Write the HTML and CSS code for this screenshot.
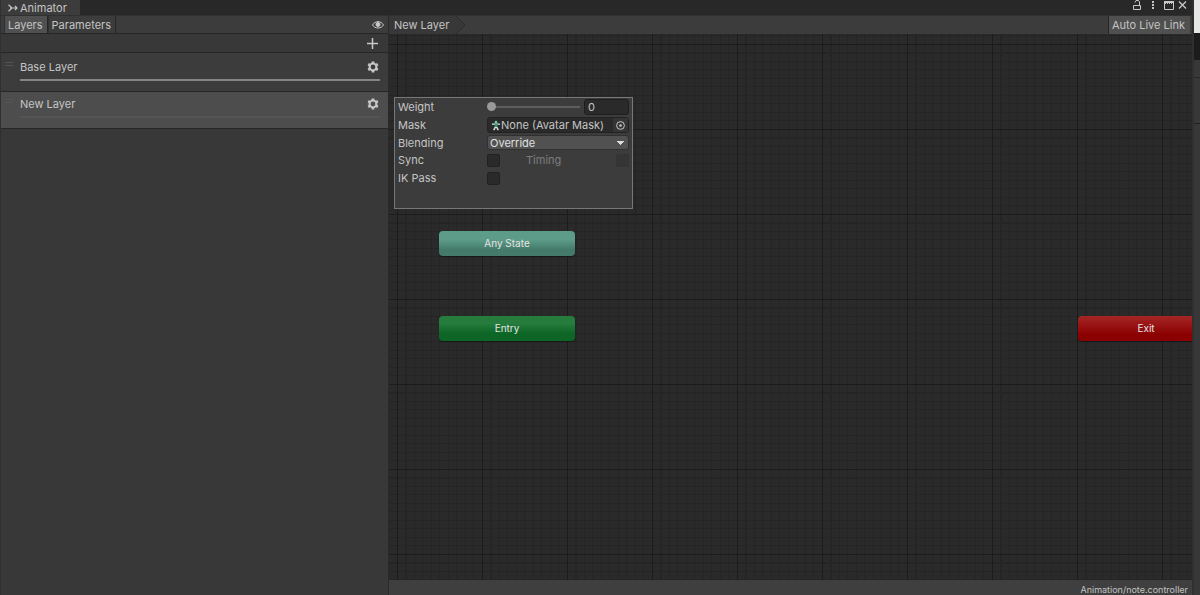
FILE: index.html
```
<!DOCTYPE html>
<html lang="en">
<head>
<meta charset="utf-8">
<title>Animator</title>
<link rel="stylesheet" href="styles.css">
</head>
<body>
<div class="app">
  <main class="window">
    <header class="titlebar">
      <div class="tab">
        <svg class="tab-icon" width="10" height="8" viewBox="0 0 10 8" fill="none" stroke="currentColor" stroke-width="1.2"><path d="M.5 .8L4 4L.5 7.2M2 4H9M7 2L9 4L7 6"/></svg>
        <span>Animator</span>
      </div>
      <div class="window-buttons">
        <button class="icon-btn" aria-label="Lock"><svg width="10" height="10" viewBox="0 0 10 10" fill="none" stroke="currentColor"><path d="M1.5 5.500h7v4h-7zM3 2.500V2L4 .5h2.500L7.500 2V5.500"/></svg></button>
        <button class="icon-btn" aria-label="More"><svg width="4" height="10" viewBox="0 0 4 10" fill="currentColor"><path d="M1 1h2v2H1zM1 4h2v2H1zM1 7h2v2H1z"/></svg></button>
        <button class="icon-btn" aria-label="Maximize"><svg width="10" height="10" viewBox="0 0 10 10" fill="none" stroke="currentColor"><path d="M.5 2h9" stroke-width="2"/><path d="M1 3.500h8" stroke-dasharray="1 1"/><path d="M.5 1v8.500h9V1"/></svg></button>
        <button class="icon-btn close" aria-label="Close"><svg width="9" height="10" viewBox="0 0 9 10" fill="none" stroke="currentColor" stroke-width="1.300"><path d="M1 1.500l7 7M8 1.500l-7 7"/></svg></button>
      </div>
    </header>
    <div class="columns">
      <aside class="sidebar">
        <nav class="side-tabs">
          <button class="side-tab active">Layers</button>
          <button class="side-tab">Parameters</button>
          <button class="icon-btn eye" aria-label="Toggle panel"><svg width="12" height="8" viewBox="0 0 12 8" fill="none" stroke="currentColor"><path d="M.5 4C3-.5 9-.5 11.500 4C9 8 3 8 .5 4z"/><circle cx="6" cy="3.500" r="2" fill="currentColor"/></svg></button>
        </nav>
        <div class="add-row"><button class="icon-btn" aria-label="Add layer"><svg width="11" height="11" viewBox="0 0 11 11" stroke="currentColor" stroke-width="1.500"><path d="M5.500 0v11M0 5.500h11"/></svg></button></div>
        <ul class="layers">
          <li class="layer">
            <span class="grip"></span>
            <div class="layer-body">
              <div class="layer-head"><span>Base Layer</span><button class="icon-btn" aria-label="Base Layer settings"><svg width="12" height="12" viewBox="0 0 12 12"><use href="#gear"/></svg></button></div>
              <div class="weight full"></div>
            </div>
          </li>
          <li class="layer selected">
            <span class="grip"></span>
            <div class="layer-body">
              <div class="layer-head"><span>New Layer</span><button class="icon-btn" aria-label="New Layer settings"><svg width="12" height="12" viewBox="0 0 12 12"><g id="gear" fill="none" stroke="currentColor"><circle cx="6" cy="6" r="3.400" stroke-width="2"/><path stroke-width="2.600" d="M6 .6v1.600M6 9.800v1.600M1.200 3.200l1.400.8M9.400 8l1.400.8M1.200 8.800l1.400-.8M9.400 4l1.400-.8"/></g></svg></button></div>
              <div class="weight"></div>
            </div>
          </li>
        </ul>
      </aside>
      <section class="graph">
        <div class="crumbs">
          <span class="crumb">New Layer</span>
          <svg class="crumb-arrow" width="10" height="18" viewBox="0 0 10 18"><path d="M0 0L9 9L0 18z" fill="#383838"/><path d="M0 0L9 9L0 18" fill="none" stroke="#2b2b2b"/></svg>
          <button class="live">Auto Live Link</button>
        </div>
        <div class="canvas">
          <form class="settings">
            <label for="weight">Weight</label>
            <div class="field"><input class="slider" id="weight" type="range" min="0" max="1" value="0"><input class="number" type="text" value="0" aria-label="Weight value"></div>
            <label for="mask">Mask</label>
            <div class="field object">
              <svg width="10" height="11" viewBox="0 0 11 11"><path d="M1 4h9M5.500 4v3M5.500 6L3 10.500M5.500 6L8 10.500" stroke="#d5e5dc" stroke-width="1.600" fill="none"/><path d="M4 4h3v3H4z" fill="#1f9a6c"/><circle cx="5.500" cy="1.800" r="1.400" fill="#6fd0a8"/></svg>
              <input class="mask" id="mask" type="text" value="None (Avatar Mask)" readonly>
              <button type="button" class="icon-btn picker" aria-label="Select mask"><svg width="9" height="9" viewBox="0 0 9 9"><circle cx="4.500" cy="4.500" r="3.900" fill="none" stroke="currentColor"/><circle cx="4.500" cy="4.500" r="1.300" fill="currentColor"/></svg></button>
            </div>
            <label for="blend">Blending</label>
            <div class="field"><select class="blend" id="blend"><option>Override</option><option>Additive</option></select></div>
            <label for="sync">Sync</label>
            <div class="field"><input class="check" id="sync" type="checkbox"><label class="timing" for="timing">Timing</label><input class="check" id="timing" type="checkbox" disabled></div>
            <label for="ik">IK Pass</label>
            <div class="field"><input class="check" id="ik" type="checkbox"></div>
          </form>
          <div class="node any">Any State</div>
          <div class="node entry">Entry</div>
          <div class="node exit">Exit</div>
        </div>
        <footer class="status">Animation/note.controller</footer>
      </section>
    </div>
  </main>
  <div class="edge"><div class="edge-light"></div><div class="edge-dark"></div><div class="edge-row"></div><div class="edge-body"></div></div>
</div>
</body>
</html>
```
FILE: styles.css
```
* { box-sizing: border-box; }
body { margin: 0; background: #383838; color: #c4c4c4; font: 11px/14px Inter, sans-serif; }
button, input, select { margin: 0; padding: 0; border: 0; color: inherit; font: inherit; background: none; }
svg { display: block; flex: none; }
.icon-btn { display: flex; align-items: center; justify-content: center; color: #c8c8c8; }
.app { display: flex; height: 100vh; overflow: hidden; }
.window { flex: 1; min-width: 0; display: flex; flex-direction: column; border-left: 1px solid #303030; }
.titlebar { display: flex; justify-content: space-between; height: 15px; background: #282828; }
.tab { display: flex; align-items: center; gap: 2px; width: 79px; padding-left: 7px; background: #3c3c3c; }
.window-buttons { display: flex; align-items: flex-start; gap: 9px; padding-right: 5px; }
.close { margin-left: -5px; }
.columns { flex: 1; min-height: 0; display: flex; }
.sidebar { flex: none; width: 387px; }
.side-tabs { display: flex; height: 19px; padding-left: 3px; border-bottom: 1px solid #262626; border-top: 1px solid #303030; background: #3c3c3c; }
.side-tab { padding: 0 4px 0 3px; border-right: 1px solid #262626; border-left: 1px solid #303030; }
.side-tab.active { background: #505050; }
.eye { margin-left: auto; padding-right: 4px; }
.add-row { display: flex; justify-content: flex-end; height: 19px; padding: 0 10px 0 0; border-bottom: 1px solid #262626; }
.layers { margin: 0; padding: 2px 0 0; list-style: none; background: #3c3c3c; }
.layer { display: flex; height: 37px; padding-right: 8px; border-bottom: 1px solid #262626; }
.layer.selected { background: #4d4d4d; }
.grip { width: 8px; height: 4px; margin: 7px 7px 0 4px; border: solid #555; border-width: 1px 0; }
.layer-body { flex: 1; padding-top: 4px; }
.layer-head { display: flex; justify-content: space-between; height: 16px; align-items: center; padding-right: 1px; }
.weight { height: 2px; margin-top: 4px; background: #555; }
.weight.full { background: #858585; }
.graph { flex: 1; min-width: 0; display: flex; flex-direction: column; border-left: 1px solid #2a2a2a; }
.crumbs { display: flex; height: 19px; border-top: 1px solid #303030; background: #3c3c3c; }
.crumb { padding: 2px 0 0 5px; background: #383838; width: 67px; }
.live { margin: 0 2px 0 auto; padding: 0 5px 0 3px; border-left: 1px solid #262626; background: #505050; }
.canvas {
  position: relative; flex: 1; overflow: hidden; background-color: #2a2a2a;
  --major: #1c1c1c; --minor: #252525;
  background-image:
    linear-gradient(90deg, var(--major) 1px, transparent 1px),
    linear-gradient(var(--major) 1px, transparent 1px),
    repeating-linear-gradient(90deg, var(--minor) 0 1px, transparent 1px 10%),
    repeating-linear-gradient(var(--minor) 0 1px, transparent 1px 10%);
  background-size: 85px 85px;
  background-position: 8px 10px;
}
.settings {
  position: absolute; left: 5px; top: 63px; width: 239px; height: 112px; padding: 0 3px;
  display: grid; grid-template-columns: 89px minmax(0, 1fr); grid-template-rows: 18px 18px 17px 18px 18px; align-content: start; align-items: center;
  border: 1px solid #777; background: #3c3c3c;
}
.field { display: flex; align-items: center; height: 16px; }
.slider { flex: 1; min-width: 0; height: 10px; margin-right: 4px; appearance: none; }
.slider::-webkit-slider-runnable-track { height: 2px; background: #5e5e5e; }
.slider::-webkit-slider-thumb { appearance: none; width: 9px; height: 9px; margin-top: -4px; border-radius: 50%; background: #999; }
.number { width: 45px; height: 16px; padding-left: 3px; border: 1px solid #1e1e1e; border-radius: 3px; background: #2a2a2a; }
.object { padding-left: 3px; border: 1px solid #222; border-radius: 3px; background: #2a2a2a; }
.mask { flex: 1; min-width: 0; }
.picker { width: 15px; height: 14px; background: #353535; }
.blend {
  width: 100%; height: 15px; padding-left: 2px; appearance: none; border: 1px solid #303030; border-radius: 3px; background: #515151; color: #e0e0e0; line-height: 12px;
  background-image: linear-gradient(to bottom left, #ddd 50%, transparent 50%), linear-gradient(to bottom right, #ddd 50%, transparent 50%);
  background-size: 4px 4px; background-repeat: no-repeat; background-position: right 7px top 5px, right 3px top 5px;
}
.check { appearance: none; width: 13px; height: 13px; border: 1px solid #212121; border-radius: 2px; background: #2a2a2a; }
.check:disabled { margin-left: auto; border-color: #333; background: #353535; }
.timing { margin-left: 26px; color: #7c7c7c; }
.node {
  position: absolute; width: 136px; height: 25px; border-radius: 4px; color: #e4e4e4;
  font-size: 10px; line-height: 25px; text-align: center; box-shadow: 0 1px 1px #181818;
}
.any { left: 50px; top: 197px; background: linear-gradient(#5d9c89 35%, #437a6a 75%); }
.entry { left: 50px; top: 282px; background: linear-gradient(#257c3c 30%, #0d6526 70%); }
.exit { left: 689px; top: 282px; background: linear-gradient(#a52626, #8b0000 75%); }
.status { height: 15px; padding: 3px 4px 0 0; background: #3f3f3f; font-size: 9px; line-height: 14px; text-align: right; }
.edge { display: flex; flex-direction: column; width: 8px; border-left: 2px solid #303030; background: #383838; }
.edge-light { height: 33px; background: #e6e8e6; }
.edge-dark { height: 27px; background: #1c1c1c; }
.edge-row { height: 18px; border-bottom: 1px solid #282828; }
.edge-body { height: 46px; border-bottom: 1px solid #222; }
```
